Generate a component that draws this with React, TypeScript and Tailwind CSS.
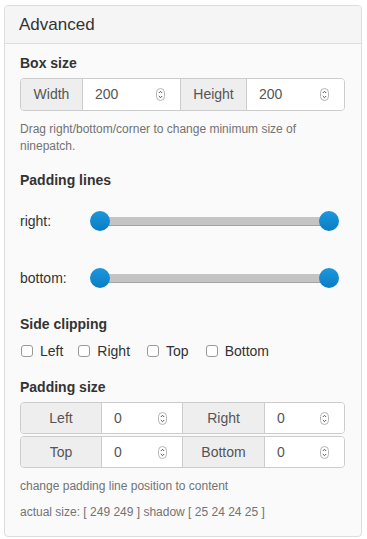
import React from 'react';

const Spinner = () => (
  <svg width="9" height="13" viewBox="0 0 9 13" className="shrink-0">
    <rect x="0.5" y="0.5" width="8" height="12" rx="4" fill="#fff" stroke="#b5b5b5" />
    <path d="M2.8 5 L4.5 3.3 L6.2 5" fill="none" stroke="#555" strokeWidth="1" />
    <path d="M2.8 8 L4.5 9.7 L6.2 8" fill="none" stroke="#555" strokeWidth="1" />
  </svg>
);

const NumInput = ({ value, className }: { value: string; className: string }) => (
  <div className={`flex items-center justify-between bg-white pl-3 pr-[15px] text-[14px] text-[#555] ${className}`}>
    <span>{value}</span>
    <Spinner />
  </div>
);

const Addon = ({ label, className }: { label: string; className: string }) => (
  <div className={`flex items-center justify-center bg-[#eeeeee] text-[14px] text-[#555] ${className}`}>
    {label}
  </div>
);

const Thumb = ({ side }: { side: 'left' | 'right' }) => (
  <div
    className={`absolute top-0 h-[20px] w-[20px] rounded-full bg-gradient-to-b from-[#1c97de] to-[#0a7dc2] ${
      side === 'left' ? 'left-0' : 'right-0'
    }`}
  />
);

const SliderRow = ({ label, className }: { label: string; className: string }) => (
  <div className={`flex h-[20px] items-center ${className}`}>
    <span className="w-[70px] text-[14px] text-[#333]">{label}</span>
    <div className="relative h-[20px] w-[249px]">
      <div className="absolute left-[10px] right-[10px] top-[6px] h-[9px] border-b border-[#a3a3a3] bg-[#c4c4c4]" />
      <Thumb side="left" />
      <Thumb side="right" />
    </div>
  </div>
);

const Check = ({ label, className }: { label: string; className: string }) => (
  <label className={`flex items-center gap-[7px] ${className}`}>
    <span className="h-[12px] w-[12px] rounded-[3px] border border-[#9a9a9a] bg-white" />
    <span className="text-[14px] text-[#333]">{label}</span>
  </label>
);

export default function App() {
  return (
    <div className="h-[539px] w-[367px] bg-white pl-[4px] pt-[5px] font-['Liberation_Sans',Arial,sans-serif] text-[#333]">
      <div className="w-[358px] overflow-hidden rounded-[4px] border border-[#dddddd] bg-[#fafafa]">
        <div className="flex h-[38px] items-center border-b border-[#dddddd] bg-[#f5f5f5] px-[14px] text-[17px]">
          Advanced
        </div>
        <div className="flex flex-col px-[15px] pb-[15px] pt-[9px]">
          <div className="h-[20px] text-[14px] font-bold leading-[20px]">Box size</div>
          <div className="mt-[5px] flex h-[33px] w-[325px] overflow-hidden rounded-[4px] border border-[#cccccc]">
            <Addon label="Width" className="w-[62px] border-r border-[#cccccc]" />
            <NumInput value="200" className="w-[98px] border-r border-[#cccccc]" />
            <Addon label="Height" className="w-[66px] border-r border-[#cccccc]" />
            <NumInput value="200" className="flex-1" />
          </div>
          <p className="mt-[10px] text-[12px] leading-[17px] text-[#737373]">
            Drag right/bottom/corner to change minimum size of ninepatch.
          </p>

          <div className="mt-[15px] h-[20px] text-[14px] font-bold leading-[20px]">Padding lines</div>
          <SliderRow label="right:" className="mt-[21px]" />
          <SliderRow label="bottom:" className="mt-[37px]" />

          <div className="mt-[26px] h-[20px] text-[14px] font-bold leading-[20px]">Side clipping</div>
          <div className="mt-[7px] flex h-[20px] items-center pl-[1px]">
            <Check label="Left" className="" />
            <Check label="Right" className="ml-[15px]" />
            <Check label="Top" className="ml-[17px]" />
            <Check label="Bottom" className="ml-[17px]" />
          </div>

          <div className="mt-[16px] h-[20px] text-[14px] font-bold leading-[20px]">Padding size</div>
          <div className="mt-[5px] flex flex-col gap-[2px]">
            <div className="flex h-[32px] w-[325px] overflow-hidden rounded-[4px] border border-[#cccccc]">
              <Addon label="Left" className="w-[81px] border-r border-[#cccccc]" />
              <NumInput value="0" className="w-[81px] border-r border-[#cccccc]" />
              <Addon label="Right" className="w-[82px] border-r border-[#cccccc]" />
              <NumInput value="0" className="flex-1" />
            </div>
            <div className="flex h-[32px] w-[325px] overflow-hidden rounded-[4px] border border-[#cccccc]">
              <Addon label="Top" className="w-[81px] border-r border-[#cccccc]" />
              <NumInput value="0" className="w-[81px] border-r border-[#cccccc]" />
              <Addon label="Bottom" className="w-[82px] border-r border-[#cccccc]" />
              <NumInput value="0" className="flex-1" />
            </div>
          </div>

          <p className="mt-[10px] text-[12px] leading-[17px] text-[#737373]">
            change padding line position to content
          </p>
          <p className="mt-[9px] text-[12px] leading-[17px] text-[#737373]">
            actual size: [ 249 249 ] shadow [ 25 24 24 25 ]
          </p>
        </div>
      </div>
    </div>
  );
}
